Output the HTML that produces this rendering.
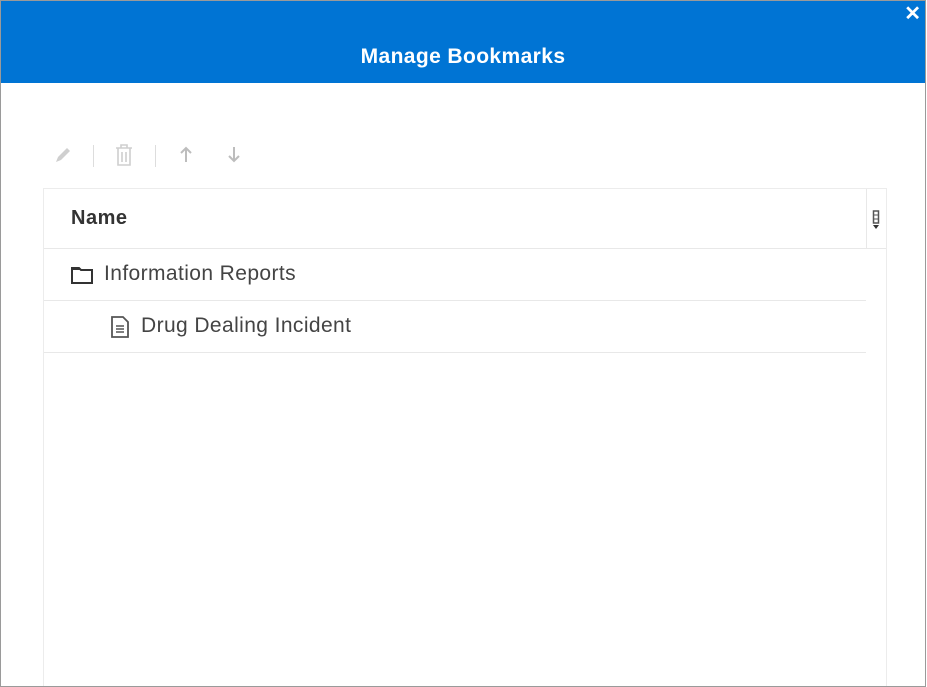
<!DOCTYPE html>
<html><head><style>
*{margin:0;padding:0;box-sizing:border-box}
html,body{width:927px;height:687px;overflow:hidden}
body{background:#fff;font-family:"Liberation Sans",sans-serif;position:relative}
.frame{position:absolute;left:0;top:0;width:926px;height:687px;border:1px solid #9a9a9a;z-index:5;pointer-events:none}
.hdr{position:absolute;left:1px;top:1px;width:924px;height:82px;background:#0074d4}
.title{position:absolute;left:0;width:924px;top:43px;text-align:center;color:#fff;font-weight:bold;font-size:21px;letter-spacing:0.4px;line-height:26px}
.x{position:absolute;right:6px;top:4px;color:#fff;font-size:20px;font-weight:bold;line-height:20px}
.tbl{position:absolute;left:43px;top:188px;width:844px;height:520px;border:1px solid #ececec}
.hrow{position:absolute;left:0;top:0;width:842px;height:60px;border-bottom:1px solid #e8e8e8}
.vline{position:absolute;left:822px;top:0;width:1px;height:60px;background:#e8e8e8}
.row{position:absolute;left:0;width:822px;height:52px;border-bottom:1px solid #e8e8e8;font-size:21px;letter-spacing:0.4px;color:#444;line-height:50px}
.sep{position:absolute;top:145px;width:1px;height:22px;background:#ddd}
</style></head><body>
<div class="hdr"><div class="title">Manage Bookmarks</div></div>
<div class="x">✕</div>
<svg style="position:absolute;left:52px;top:145px" width="22" height="22" viewBox="0 0 22 22"><path d="M4 17 L6 12 L15 3 L18 6 L9 15 Z" fill="#cfcfcf"/></svg>
<div class="sep" style="left:93px"></div>
<svg style="position:absolute;left:113px;top:143px" width="22" height="24" viewBox="0 0 22 24"><g fill="none" stroke="#cfcfcf" stroke-width="1.6"><path d="M3 5H19M8 5V2H14V5M5 5V22H17V5M9 9V19M13 9V19"/></g></svg>
<div class="sep" style="left:155px"></div>
<svg style="position:absolute;left:178px;top:145px" width="16" height="20" viewBox="0 0 16 20"><path d="M8 3V17M3 8L8 3L13 8" fill="none" stroke="#bdbdbd" stroke-width="2"/></svg>
<svg style="position:absolute;left:226px;top:145px" width="16" height="20" viewBox="0 0 16 20"><path d="M8 2V16M3 11L8 16L13 11" fill="none" stroke="#bdbdbd" stroke-width="2"/></svg>
<div class="tbl">
<div class="hrow"><div style="position:absolute;left:27px;top:18px;font-size:20px;letter-spacing:0.5px;font-weight:bold;color:#333">Name</div><div class="vline"></div>
<svg style="position:absolute;left:827px;top:20px" width="10" height="24" viewBox="0 0 10 24"><rect x="2.5" y="2" width="5" height="12" fill="none" stroke="#555" stroke-width="1.5"/><path d="M2.5 6H7.5M2.5 10H7.5" stroke="#555"/><path d="M2 16H8L5 20Z" fill="#333"/></svg></div>
<div class="row" style="top:60px"><svg style="position:absolute;left:27px;top:17px" width="22" height="18" viewBox="0 0 22 18"><path d="M1 2H8L10 4H21V17H1Z" fill="none" stroke="#333" stroke-width="2"/><path d="M1 2H8L10 4H1Z" fill="#333"/></svg><span style="position:absolute;left:60px">Information Reports</span></div>
<div class="row" style="top:112px"><svg style="position:absolute;left:66px;top:15px" width="20" height="22" viewBox="0 0 20 22"><path d="M2 1H13L18 6V21H2Z" fill="none" stroke="#555" stroke-width="1.8"/><path d="M6 10H14M6 13H14M6 16H14" stroke="#555" stroke-width="1.5"/></svg><span style="position:absolute;left:97px">Drug Dealing Incident</span></div>
</div>
<div class="frame"></div>
</body></html>
